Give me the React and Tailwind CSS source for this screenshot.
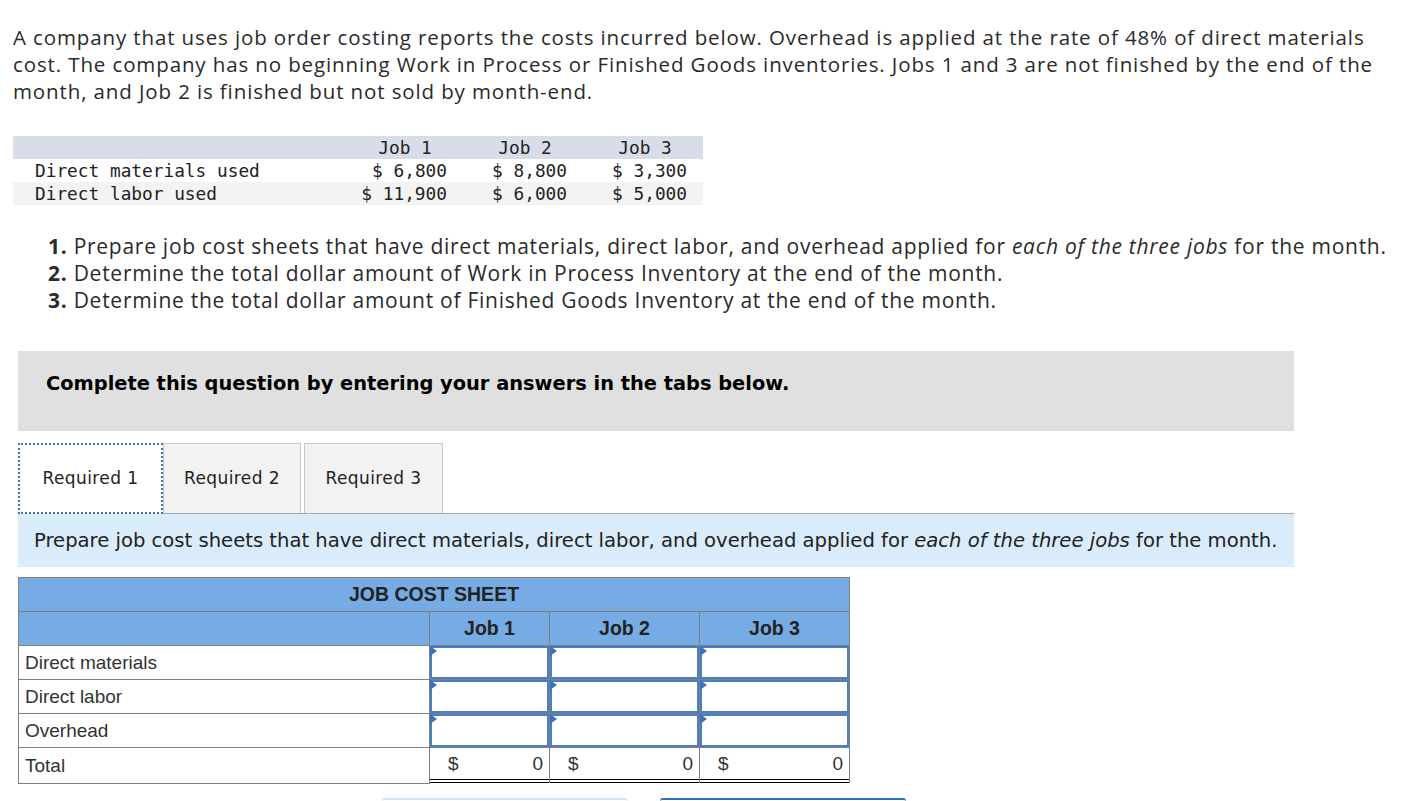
import React from 'react';

const body = { fontFamily: '"Open Sans", "Liberation Sans", sans-serif' };
const mono = { fontFamily: '"DejaVu Sans Mono", "Liberation Mono", monospace' };
const verdana = { fontFamily: '"DejaVu Sans", Verdana, sans-serif' };
const arial = { fontFamily: '"Liberation Sans", Arial, sans-serif' };

const dataRows = [
  { label: 'Direct materials used', values: ['$ 6,800', '$ 8,800', '$ 3,300'] },
  { label: 'Direct labor used', values: ['$ 11,900', '$ 6,000', '$ 5,000'] },
];

const sheetRows = ['Direct materials', 'Direct labor', 'Overhead'];

function InputCell({ wide }) {
  return (
    <td className={`border border-[#7f7f7f] p-0 ${wide ? 'w-[150px]' : 'w-[120px]'}`}>
      <div className="relative h-[33px] border-2 border-[#4a7fc3] bg-white">
        <span className="absolute left-[-2px] top-[-2px] h-0 w-0 border-y-[5px] border-l-[7px] border-y-transparent border-l-[#3a72bd]" />
      </div>
    </td>
  );
}

function TotalCell({ wide }) {
  return (
    <td className={`border-x border-t border-[#7f7f7f] p-0 ${wide ? 'w-[150px]' : 'w-[120px]'}`}>
      <div className="flex h-[35px] items-center justify-between border-b-[4px] border-double border-black pl-[18px] pr-[6px] pt-[2px] text-[19px] text-[#333]">
        <span>$</span>
        <span>0</span>
      </div>
    </td>
  );
}

export default function App() {
  return (
    <div className="w-[1410px] min-h-[801px] bg-white px-[13px] pt-[24px] text-[#222]" style={body}>
      <p className="w-[1390px] text-[20.5px] leading-[27px] tracking-[0.88px] text-[#2a2a2a]">
        A company that uses job order costing reports the costs incurred below. Overhead is applied at the rate of 48% of direct materials cost. The company has no beginning Work in Process or Finished Goods inventories. Jobs 1 and 3 are not finished by the end of the month, and Job 2 is finished but not sold by month-end.
      </p>

      {/* Given data */}
      <table className="mt-[31px] w-[690px] border-collapse text-[17.8px] text-[#222]" style={mono}>
        <thead>
          <tr className="h-[23px] bg-[#d9dde9]">
            <th className="w-[330px]" />
            {['Job 1', 'Job 2', 'Job 3'].map((j) => (
              <th key={j} className="w-[120px] pl-[4px] text-center font-normal leading-[23px]">{j}</th>
            ))}
          </tr>
        </thead>
        <tbody>
          {dataRows.map((r, i) => (
            <tr key={r.label} className={`h-[23px] ${i === 1 ? 'bg-[#f3f3f3]' : 'bg-white'}`}>
              <td className="pl-[22px] leading-[23px]">{r.label}</td>
              {r.values.map((v, k) => (
                <td key={k} className="pr-[16px] text-right leading-[23px]">{v}</td>
              ))}
            </tr>
          ))}
        </tbody>
      </table>

      {/* Requirements */}
      <ol className="mt-[28px] pl-[35px] text-[21px] leading-[27px] tracking-[0.73px] text-[#2a2a2a]">
        <li><b>1.</b> Prepare job cost sheets that have direct materials, direct labor, and overhead applied for <i>each of the three jobs</i> for the month.</li>
        <li><b>2.</b> Determine the total dollar amount of Work in Process Inventory at the end of the month.</li>
        <li><b>3.</b> Determine the total dollar amount of Finished Goods Inventory at the end of the month.</li>
      </ol>

      <div className="ml-[5px] mt-[37px] h-[80px] w-[1276px] bg-[#e0e0e0] pl-[28px] pt-[22px]" style={verdana}>
        <p className="text-[19.4px] font-bold leading-[22px] text-black">Complete this question by entering your answers in the tabs below.</p>
      </div>

      {/* Tabs */}
      <div className="ml-[5px] mt-[12px] w-[1276px]" style={verdana}>
        <div className="flex h-[71px] items-end border-b border-[#a8a8a8]">
          <button className="relative z-10 -mb-px flex h-[71px] w-[145px] items-center justify-center border-2 border-dotted border-[#3a72bd] bg-white text-[17px] tracking-[0.4px] text-[#222]">
            Required 1
          </button>
          <button className="flex h-[70px] w-[138px] items-center justify-center border border-b-0 border-[#c8c8c8] bg-[#f2f2f2] text-[17px] tracking-[0.4px] text-[#222]">
            Required 2
          </button>
          <button className="ml-[3px] flex h-[70px] w-[139px] items-center justify-center border border-b-0 border-[#c8c8c8] bg-[#f2f2f2] text-[17px] tracking-[0.4px] text-[#222]">
            Required 3
          </button>
        </div>
        <div className="flex h-[53px] items-center bg-[#daebf9] pl-[16px] text-[19.6px] text-[#222]">
          <p>Prepare job cost sheets that have direct materials, direct labor, and overhead applied for <i>each of the three jobs</i> for the month.</p>
        </div>
      </div>

      {/* Job cost sheet */}
      <table className="ml-[5px] mt-[10px] w-[832px] border-collapse text-[19px] text-[#222]" style={arial}>
        <thead>
          <tr className="h-[34px] bg-[#77abe3]">
            <th colSpan={4} className="border border-[#7f7f7f] text-center text-[19.5px] font-bold text-[#222]">JOB COST SHEET</th>
          </tr>
          <tr className="h-[34px] bg-[#77abe3]">
            <th className="border border-[#7f7f7f]" />
            <th className="w-[120px] border border-[#7f7f7f] text-[19.5px] font-bold">Job 1</th>
            <th className="w-[150px] border border-[#7f7f7f] text-[19.5px] font-bold">Job 2</th>
            <th className="w-[150px] border border-[#7f7f7f] text-[19.5px] font-bold">Job 3</th>
          </tr>
        </thead>
        <tbody>
          {sheetRows.map((r) => (
            <tr key={r} className="h-[34px]">
              <td className="border border-[#7f7f7f] pl-[6px] pt-[2px] text-[#333]">{r}</td>
              <InputCell />
              <InputCell wide />
              <InputCell wide />
            </tr>
          ))}
          <tr className="h-[34px]">
            <td className="border border-[#7f7f7f] pl-[6px] pt-[2px] text-[#333]">Total</td>
            <TotalCell />
            <TotalCell wide />
            <TotalCell wide />
          </tr>
        </tbody>
      </table>

      <div className="mt-[14px] flex gap-[32px] pl-[369px]">
        <button className="h-[40px] w-[246px] rounded-t-[3px] border-t-2 border-[#d3e4f5] bg-white" />
        <button className="h-[40px] w-[246px] rounded-t-[3px] border-t-2 border-[#2f6fc0] bg-white" />
      </div>
    </div>
  );
}
